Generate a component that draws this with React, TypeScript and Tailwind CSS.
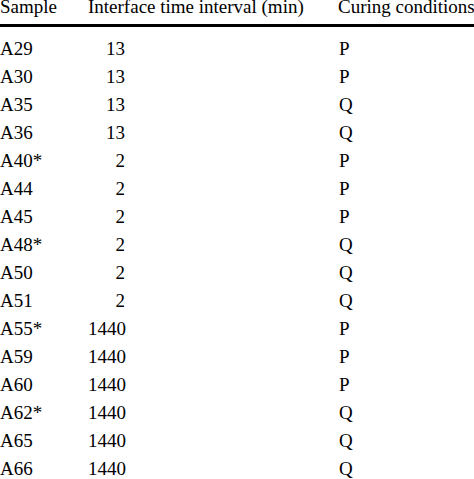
import React from "react";

type Row = { sample: string; interval: string; curing: string };

const rows: Row[] = [
  { sample: "A29", interval: "13", curing: "P" },
  { sample: "A30", interval: "13", curing: "P" },
  { sample: "A35", interval: "13", curing: "Q" },
  { sample: "A36", interval: "13", curing: "Q" },
  { sample: "A40*", interval: "2", curing: "P" },
  { sample: "A44", interval: "2", curing: "P" },
  { sample: "A45", interval: "2", curing: "P" },
  { sample: "A48*", interval: "2", curing: "Q" },
  { sample: "A50", interval: "2", curing: "Q" },
  { sample: "A51", interval: "2", curing: "Q" },
  { sample: "A55*", interval: "1440", curing: "P" },
  { sample: "A59", interval: "1440", curing: "P" },
  { sample: "A60", interval: "1440", curing: "P" },
  { sample: "A62*", interval: "1440", curing: "Q" },
  { sample: "A65", interval: "1440", curing: "Q" },
  { sample: "A66", interval: "1440", curing: "Q" },
];

const App = () => {
  return (
    <div className="w-[474px] h-[479px] overflow-hidden bg-white text-black text-[19px] font-['Liberation_Serif','Times_New_Roman',serif]">
      {/* header */}
      <div className="flex h-[24px] leading-[14px] whitespace-nowrap box-content border-b-[3px] border-black">
        <div className="w-[88px] shrink-0">Sample</div>
        <div className="w-[250px] shrink-0">Interface time interval (min)</div>
        <div className="shrink-0">Curing conditions</div>
      </div>
      <div className="pt-[8px]">
        {rows.map((row, index) => (
          <div key={index} className="flex h-[28px] leading-[28px]">
            <div className="w-[88px] shrink-0">{row.sample}</div>
            <div className="w-[37px] shrink-0 text-right">{row.interval}</div>
            <div className="w-[214px] shrink-0" />
            <div className="shrink-0">{row.curing}</div>
          </div>
        ))}
      </div>
    </div>
  );
};

export default App;
